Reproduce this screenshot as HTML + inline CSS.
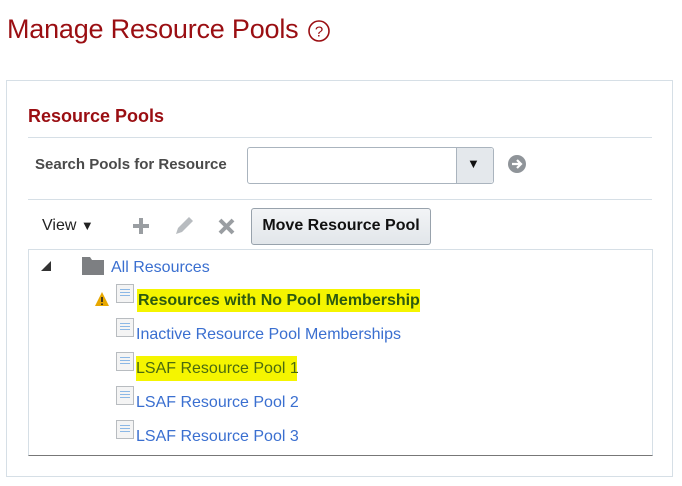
<!DOCTYPE html>
<html><head><style>
body{margin:0;width:682px;height:486px;background:#fff;font-family:"Liberation Sans",sans-serif;position:relative;overflow:hidden}
.a{position:absolute;white-space:nowrap}
.t{color:#3a6fd0;font-size:16px}
.doc{position:absolute;width:16px;height:17px;border:1px solid #b8bcc0;background:#f4f4f4}
.doc i{position:absolute;left:3px;width:10px;height:1px;background:#8cb8e6}
</style></head><body>
<div class="a" style="left:7px;top:14px;font-size:27px;color:#9a0e12;letter-spacing:-0.2px">Manage Resource Pools</div>
<svg class="a" style="left:307px;top:19px" width="24" height="24"><circle cx="12" cy="12" r="10" fill="none" stroke="#9a0e12" stroke-width="1.6"/><text x="12" y="17.5" font-size="15" text-anchor="middle" fill="#9a0e12" font-family="Liberation Sans">?</text></svg>
<div class="a" style="left:6px;top:80px;width:665px;height:395px;border:1px solid #d6dfe6"></div>
<div class="a" style="left:28px;top:106px;font-size:18px;font-weight:bold;color:#9a0e12">Resource Pools</div>
<div class="a" style="left:28px;top:137px;width:624px;height:1px;background:#d6dfe6"></div>
<div class="a" style="left:35px;top:156px;font-size:15px;font-weight:bold;color:#4a4a4a">Search Pools for Resource</div>
<div class="a" style="left:247px;top:147px;width:245px;height:35px;border:1px solid #aab4be;border-radius:3px;background:#fff"></div>
<div class="a" style="left:456px;top:148px;width:36px;height:35px;border-left:1px solid #aab4be;background:#e4e8ec;border-radius:0 3px 3px 0"></div>
<div class="a" style="left:467px;top:156px;font-size:13px;color:#111">▼</div>
<svg class="a" style="left:507px;top:154px" width="20" height="20"><circle cx="10" cy="10" r="9" fill="#8f9499"/><path d="M5 10h8M10 6l4 4-4 4" stroke="#fff" stroke-width="2.2" fill="none"/></svg>
<div class="a" style="left:28px;top:199px;width:624px;height:1px;background:#d6dfe6"></div>
<div class="a" style="left:42px;top:217px;font-size:16px;color:#222">View <span style="font-size:13px">▼</span></div>
<svg class="a" style="left:131px;top:216px" width="20" height="20"><path d="M10 2v16M2 10h16" stroke="#9a9ea2" stroke-width="4"/></svg>
<svg class="a" style="left:173px;top:215px" width="22" height="22"><path d="M3 19l2-6 11-11 4 4-11 11z" fill="#b8bcc0"/></svg>
<svg class="a" style="left:217px;top:217px" width="19" height="19"><path d="M3 3l13 13M16 3L3 16" stroke="#9a9ea2" stroke-width="4"/></svg>
<div class="a" style="left:251px;top:208px;width:178px;height:35px;border:1px solid #98a2ac;border-radius:3px;background:linear-gradient(#f2f4f6,#e2e6ea);font-size:16px;font-weight:bold;color:#111;text-align:center;line-height:34px">Move Resource Pool</div>
<div class="a" style="left:28px;top:249px;width:623px;height:205px;border:1px solid #d6dfe6;border-bottom:1px solid #777"></div>
<svg class="a" style="left:40px;top:260px" width="12" height="12"><path d="M11 1L1 11h10z" fill="#333"/></svg>
<svg class="a" style="left:81px;top:256px" width="24" height="20"><path d="M1 1h8l2 3h12v15H1z" fill="#7d7f82"/></svg>
<div class="a t" style="left:111px;top:259px">All Resources</div>
<svg class="a" style="left:94px;top:291px" width="16" height="16"><path d="M8 1L15 15H1z" fill="#e8a800"/><path d="M8 6v5M8 12.5v1.5" stroke="#222" stroke-width="1.6"/></svg>
<div class="a" style="left:137px;top:289px;width:283px;height:23px;background:#f5f500"></div>
<div class="a" style="left:138px;top:292px;font-size:16px;font-weight:bold;color:#2d5a10">Resources with No Pool Membership</div>
<div class="a t" style="left:136px;top:326px">Inactive Resource Pool Memberships</div>
<div class="a" style="left:136px;top:356px;width:161px;height:25px;background:#f5f500"></div>
<div class="a t" style="left:136px;top:360px;color:#4a6a10">LSAF Resource Pool 1</div>
<div class="a t" style="left:136px;top:394px">LSAF Resource Pool 2</div>
<div class="a t" style="left:136px;top:428px">LSAF Resource Pool 3</div>
<div class="doc" style="left:116px;top:284px"><i style="top:4px"></i><i style="top:7px"></i><i style="top:10px"></i></div>
<div class="doc" style="left:116px;top:318px"><i style="top:4px"></i><i style="top:7px"></i><i style="top:10px"></i></div>
<div class="doc" style="left:116px;top:352px"><i style="top:4px"></i><i style="top:7px"></i><i style="top:10px"></i></div>
<div class="doc" style="left:116px;top:386px"><i style="top:4px"></i><i style="top:7px"></i><i style="top:10px"></i></div>
<div class="doc" style="left:116px;top:420px"><i style="top:4px"></i><i style="top:7px"></i><i style="top:10px"></i></div>
</body></html>
